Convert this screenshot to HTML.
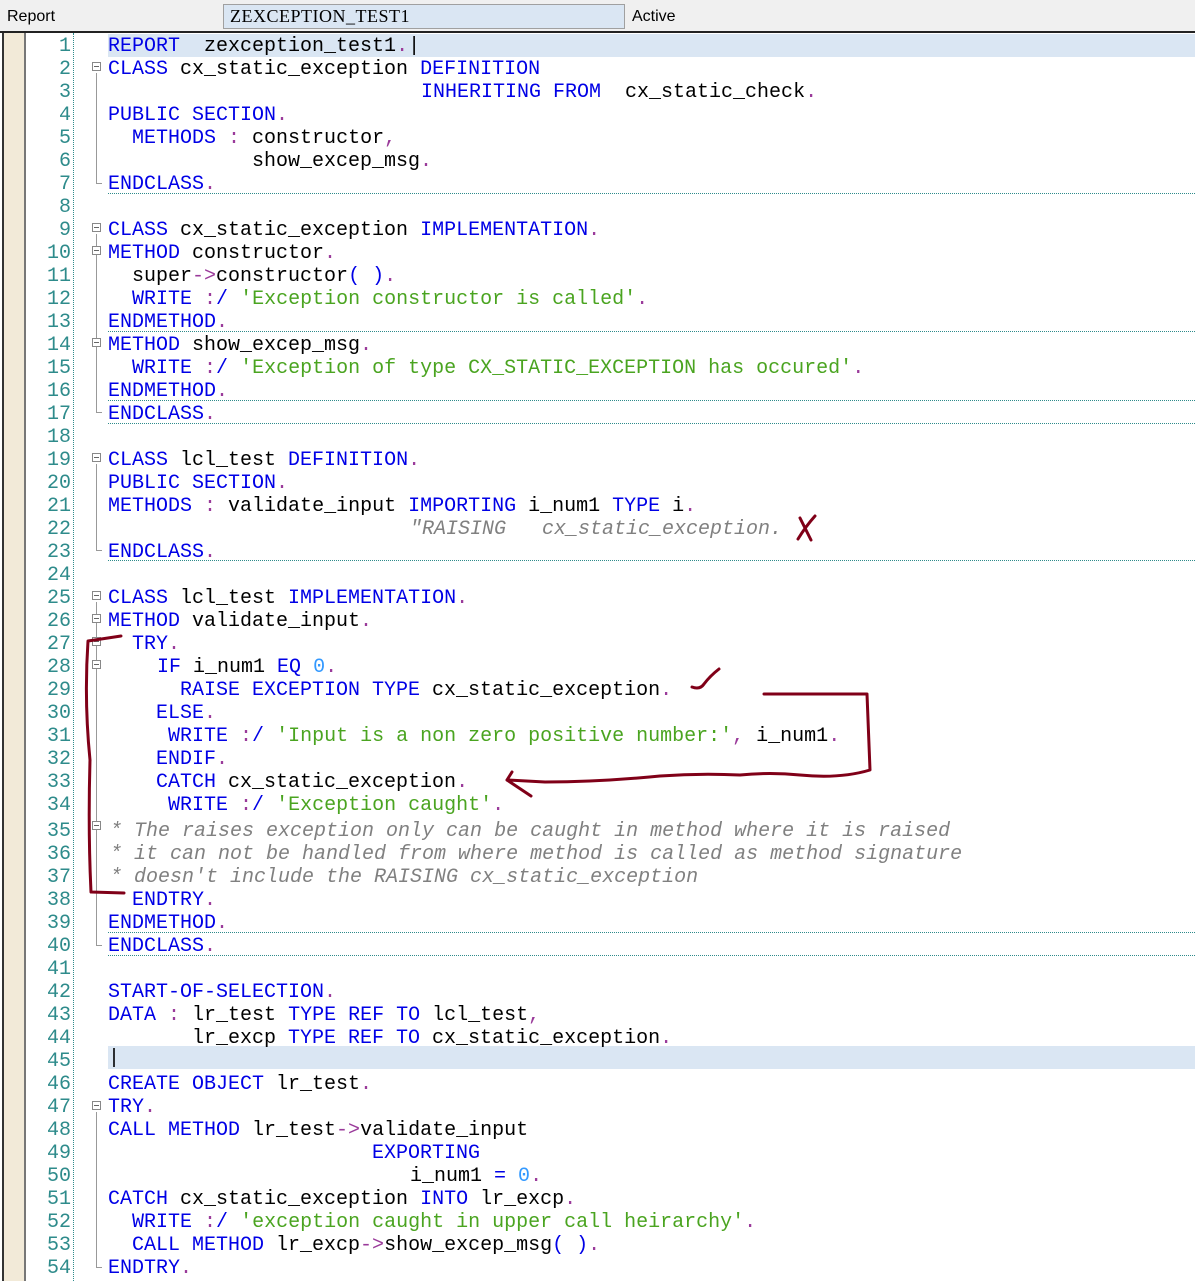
<!DOCTYPE html>
<html><head><meta charset="utf-8">
<style>
html,body{margin:0;padding:0;}
body{width:1195px;height:1281px;position:relative;overflow:hidden;background:#fff;font-family:"Liberation Mono",monospace;}
#hdr{position:absolute;left:0;top:0;width:1195px;height:31px;background:#f0f0f0;border-bottom:2px solid #222;font-family:"Liberation Sans",sans-serif;font-size:16px;color:#000;}
#hdr .lbl{position:absolute;top:8px;}
#box{position:absolute;left:223px;top:4px;width:402px;height:25px;background:#dae6f3;border:1px solid #a0a0a0;font-family:"Liberation Serif",serif;font-size:18px;line-height:23px;padding-left:6px;box-sizing:border-box;letter-spacing:0.5px;}
#gut{position:absolute;left:2px;top:33px;width:20px;height:1248px;background:#f2ead8;border-left:2px solid #333;border-right:2px solid #777;}
#vd{position:absolute;left:73px;top:33px;height:1248px;border-left:1px dotted #2e8b8b;}
.ln{position:absolute;left:24px;width:47px;text-align:right;font-size:20px;line-height:23px;height:23px;color:#2e8b8b;margin-top:1px;}
.l{position:absolute;font-size:20px;line-height:23px;height:23px;white-space:pre;color:#000;margin-top:1px;}
.k{color:#0000e6}.s{color:#4aa420}.p{color:#9a3a9a}.c{color:#808080;font-style:italic}.n{color:#3399ff}
.hl{position:absolute;left:108px;width:1087px;height:23px;background:#dae6f3;}
.sep{position:absolute;left:108px;width:1087px;border-top:1px dotted #2e8b8b;}
.fb{position:absolute;left:92px;width:9px;height:9px;border:1px solid #888;background:#fff;box-sizing:border-box;}
.fb:after{content:"";position:absolute;left:1px;top:3px;width:5px;height:1px;background:#666;}
.fv{position:absolute;left:96px;width:1px;background:#999;}
.fe{position:absolute;left:96px;width:6px;height:1px;background:#999;}
</style></head><body>
<div id="hdr"><span class="lbl" style="left:7px">Report</span><div id="box">ZEXCEPTION_TEST1</div><span class="lbl" style="left:632px">Active</span></div>
<div id="gut"></div><div id="vd"></div>
<div class="hl" style="top:34px"></div>
<div class="hl" style="top:1046px"></div>
<div class="sep" style="top:193px"></div>
<div class="sep" style="top:331px"></div>
<div class="sep" style="top:400px"></div>
<div class="sep" style="top:423px"></div>
<div class="sep" style="top:560px"></div>
<div class="sep" style="top:932px"></div>
<div class="sep" style="top:955px"></div>

<div class="fv" style="top:73px;height:110px"></div><div class="fe" style="top:183px"></div>
<div class="fv" style="top:234px;height:178px"></div><div class="fe" style="top:412px"></div>
<div class="fv" style="top:464px;height:86px"></div><div class="fe" style="top:550px"></div>
<div class="fv" style="top:602px;height:343px"></div><div class="fe" style="top:945px"></div>
<div class="fv" style="top:1112px;height:155px"></div><div class="fe" style="top:1267px"></div>
<div class="fb" style="top:62px"></div>
<div class="fb" style="top:223px"></div>
<div class="fb" style="top:246px"></div>
<div class="fb" style="top:338px"></div>
<div class="fb" style="top:453px"></div>
<div class="fb" style="top:591px"></div>
<div class="fb" style="top:614px"></div>
<div class="fb" style="top:637px"></div>
<div class="fb" style="top:660px"></div>
<div class="fb" style="top:821px"></div>
<div class="fb" style="top:1101px"></div>

<div class="l" style="top:34px;left:108px"><span class="k">REPORT</span>  zexception_test1<span class="p">.</span>|</div>
<div class="l" style="top:57px;left:108px"><span class="k">CLASS</span> cx_static_exception <span class="k">DEFINITION</span></div>
<div class="l" style="top:80px;left:421px"><span class="k">INHERITING FROM</span>  cx_static_check<span class="p">.</span></div>
<div class="l" style="top:103px;left:108px"><span class="k">PUBLIC SECTION</span><span class="p">.</span></div>
<div class="l" style="top:126px;left:132px"><span class="k">METHODS</span> <span class="p">:</span> constructor<span class="p">,</span></div>
<div class="l" style="top:149px;left:252px">show_excep_msg<span class="p">.</span></div>
<div class="l" style="top:172px;left:108px"><span class="k">ENDCLASS</span><span class="p">.</span></div>
<div class="l" style="top:218px;left:108px"><span class="k">CLASS</span> cx_static_exception <span class="k">IMPLEMENTATION</span><span class="p">.</span></div>
<div class="l" style="top:241px;left:108px"><span class="k">METHOD</span> constructor<span class="p">.</span></div>
<div class="l" style="top:264px;left:132px">super<span class="p">-&gt;</span>constructor<span class="k">(</span> <span class="k">)</span><span class="p">.</span></div>
<div class="l" style="top:287px;left:132px"><span class="k">WRITE</span> <span class="p">:</span><span class="k">/</span> <span class="s">'Exception constructor is called'</span><span class="p">.</span></div>
<div class="l" style="top:310px;left:108px"><span class="k">ENDMETHOD</span><span class="p">.</span></div>
<div class="l" style="top:333px;left:108px"><span class="k">METHOD</span> show_excep_msg<span class="p">.</span></div>
<div class="l" style="top:356px;left:132px"><span class="k">WRITE</span> <span class="p">:</span><span class="k">/</span> <span class="s">'Exception of type CX_STATIC_EXCEPTION has occured'</span><span class="p">.</span></div>
<div class="l" style="top:379px;left:108px"><span class="k">ENDMETHOD</span><span class="p">.</span></div>
<div class="l" style="top:402px;left:108px"><span class="k">ENDCLASS</span><span class="p">.</span></div>
<div class="l" style="top:448px;left:108px"><span class="k">CLASS</span> lcl_test <span class="k">DEFINITION</span><span class="p">.</span></div>
<div class="l" style="top:471px;left:108px"><span class="k">PUBLIC SECTION</span><span class="p">.</span></div>
<div class="l" style="top:494px;left:108px"><span class="k">METHODS</span> <span class="p">:</span> validate_input <span class="k">IMPORTING</span> i_num1 <span class="k">TYPE</span> i<span class="p">.</span></div>
<div class="l" style="top:517px;left:410px"><span class="c">"RAISING   cx_static_exception.</span></div>
<div class="l" style="top:540px;left:108px"><span class="k">ENDCLASS</span><span class="p">.</span></div>
<div class="l" style="top:586px;left:108px"><span class="k">CLASS</span> lcl_test <span class="k">IMPLEMENTATION</span><span class="p">.</span></div>
<div class="l" style="top:609px;left:108px"><span class="k">METHOD</span> validate_input<span class="p">.</span></div>
<div class="l" style="top:632px;left:132px"><span class="k">TRY</span><span class="p">.</span></div>
<div class="l" style="top:655px;left:157px"><span class="k">IF</span> i_num1 <span class="k">EQ</span> <span class="n">0</span><span class="p">.</span></div>
<div class="l" style="top:678px;left:180px"><span class="k">RAISE EXCEPTION TYPE</span> cx_static_exception<span class="p">.</span></div>
<div class="l" style="top:701px;left:156px"><span class="k">ELSE</span><span class="p">.</span></div>
<div class="l" style="top:724px;left:168px"><span class="k">WRITE</span> <span class="p">:</span><span class="k">/</span> <span class="s">'Input is a non zero positive number:'</span><span class="p">,</span> i_num1<span class="p">.</span></div>
<div class="l" style="top:747px;left:156px"><span class="k">ENDIF</span><span class="p">.</span></div>
<div class="l" style="top:770px;left:156px"><span class="k">CATCH</span> cx_static_exception<span class="p">.</span></div>
<div class="l" style="top:793px;left:168px"><span class="k">WRITE</span> <span class="p">:</span><span class="k">/</span> <span class="s">'Exception caught'</span><span class="p">.</span></div>
<div class="l" style="top:819px;left:110px"><span class="c">* The raises exception only can be caught in method where it is raised</span></div>
<div class="l" style="top:842px;left:110px"><span class="c">* it can not be handled from where method is called as method signature</span></div>
<div class="l" style="top:865px;left:110px"><span class="c">* doesn't include the RAISING cx_static_exception</span></div>
<div class="l" style="top:888px;left:132px"><span class="k">ENDTRY</span><span class="p">.</span></div>
<div class="l" style="top:911px;left:108px"><span class="k">ENDMETHOD</span><span class="p">.</span></div>
<div class="l" style="top:934px;left:108px"><span class="k">ENDCLASS</span><span class="p">.</span></div>
<div class="l" style="top:980px;left:108px"><span class="k">START-OF-SELECTION</span><span class="p">.</span></div>
<div class="l" style="top:1003px;left:108px"><span class="k">DATA</span> <span class="p">:</span> lr_test <span class="k">TYPE REF TO</span> lcl_test<span class="p">,</span></div>
<div class="l" style="top:1026px;left:192px">lr_excp <span class="k">TYPE REF TO</span> cx_static_exception<span class="p">.</span></div>
<div class="l" style="top:1046px;left:108px">|</div>
<div class="l" style="top:1072px;left:108px"><span class="k">CREATE OBJECT</span> lr_test<span class="p">.</span></div>
<div class="l" style="top:1095px;left:108px"><span class="k">TRY</span><span class="p">.</span></div>
<div class="l" style="top:1118px;left:108px"><span class="k">CALL METHOD</span> lr_test<span class="p">-&gt;</span>validate_input</div>
<div class="l" style="top:1141px;left:372px"><span class="k">EXPORTING</span></div>
<div class="l" style="top:1164px;left:410px">i_num1 <span class="k">=</span> <span class="n">0</span><span class="p">.</span></div>
<div class="l" style="top:1187px;left:108px"><span class="k">CATCH</span> cx_static_exception <span class="k">INTO</span> lr_excp<span class="p">.</span></div>
<div class="l" style="top:1210px;left:132px"><span class="k">WRITE</span> <span class="p">:</span><span class="k">/</span> <span class="s">'exception caught in upper call heirarchy'</span><span class="p">.</span></div>
<div class="l" style="top:1233px;left:132px"><span class="k">CALL METHOD</span> lr_excp<span class="p">-&gt;</span>show_excep_msg<span class="k">(</span> <span class="k">)</span><span class="p">.</span></div>
<div class="l" style="top:1256px;left:108px"><span class="k">ENDTRY</span><span class="p">.</span></div>

<div class="ln" style="top:34px">1</div><div class="ln" style="top:57px">2</div><div class="ln" style="top:80px">3</div><div class="ln" style="top:103px">4</div><div class="ln" style="top:126px">5</div><div class="ln" style="top:149px">6</div><div class="ln" style="top:172px">7</div><div class="ln" style="top:195px">8</div><div class="ln" style="top:218px">9</div><div class="ln" style="top:241px">10</div><div class="ln" style="top:264px">11</div><div class="ln" style="top:287px">12</div><div class="ln" style="top:310px">13</div><div class="ln" style="top:333px">14</div><div class="ln" style="top:356px">15</div><div class="ln" style="top:379px">16</div><div class="ln" style="top:402px">17</div><div class="ln" style="top:425px">18</div><div class="ln" style="top:448px">19</div><div class="ln" style="top:471px">20</div><div class="ln" style="top:494px">21</div><div class="ln" style="top:517px">22</div><div class="ln" style="top:540px">23</div><div class="ln" style="top:563px">24</div><div class="ln" style="top:586px">25</div><div class="ln" style="top:609px">26</div><div class="ln" style="top:632px">27</div><div class="ln" style="top:655px">28</div><div class="ln" style="top:678px">29</div><div class="ln" style="top:701px">30</div><div class="ln" style="top:724px">31</div><div class="ln" style="top:747px">32</div><div class="ln" style="top:770px">33</div><div class="ln" style="top:793px">34</div><div class="ln" style="top:819px">35</div><div class="ln" style="top:842px">36</div><div class="ln" style="top:865px">37</div><div class="ln" style="top:888px">38</div><div class="ln" style="top:911px">39</div><div class="ln" style="top:934px">40</div><div class="ln" style="top:957px">41</div><div class="ln" style="top:980px">42</div><div class="ln" style="top:1003px">43</div><div class="ln" style="top:1026px">44</div><div class="ln" style="top:1049px">45</div><div class="ln" style="top:1072px">46</div><div class="ln" style="top:1095px">47</div><div class="ln" style="top:1118px">48</div><div class="ln" style="top:1141px">49</div><div class="ln" style="top:1164px">50</div><div class="ln" style="top:1187px">51</div><div class="ln" style="top:1210px">52</div><div class="ln" style="top:1233px">53</div><div class="ln" style="top:1256px">54</div>

<svg width="1195" height="1281" style="position:absolute;left:0;top:0" fill="none" stroke="#800018" stroke-width="3" stroke-linecap="round" stroke-linejoin="round">
<path d="M121 636 L88 641 Q84 700 90 760 Q88 830 91 892 L124 893"/>
<path d="M800 518 Q806 530 811 540 M815 516 Q806 526 798 539"/>
<path d="M692 687 Q700 690 704 684 Q710 676 719 669"/>
<path d="M764 694 L867 694 L870 770 Q840 779 800 775 Q770 772 740 775 Q700 773 660 776 Q600 782 545 782 L507 780 M507 780 L512 772 M507 780 L531 796"/>
</svg>
</body></html>
